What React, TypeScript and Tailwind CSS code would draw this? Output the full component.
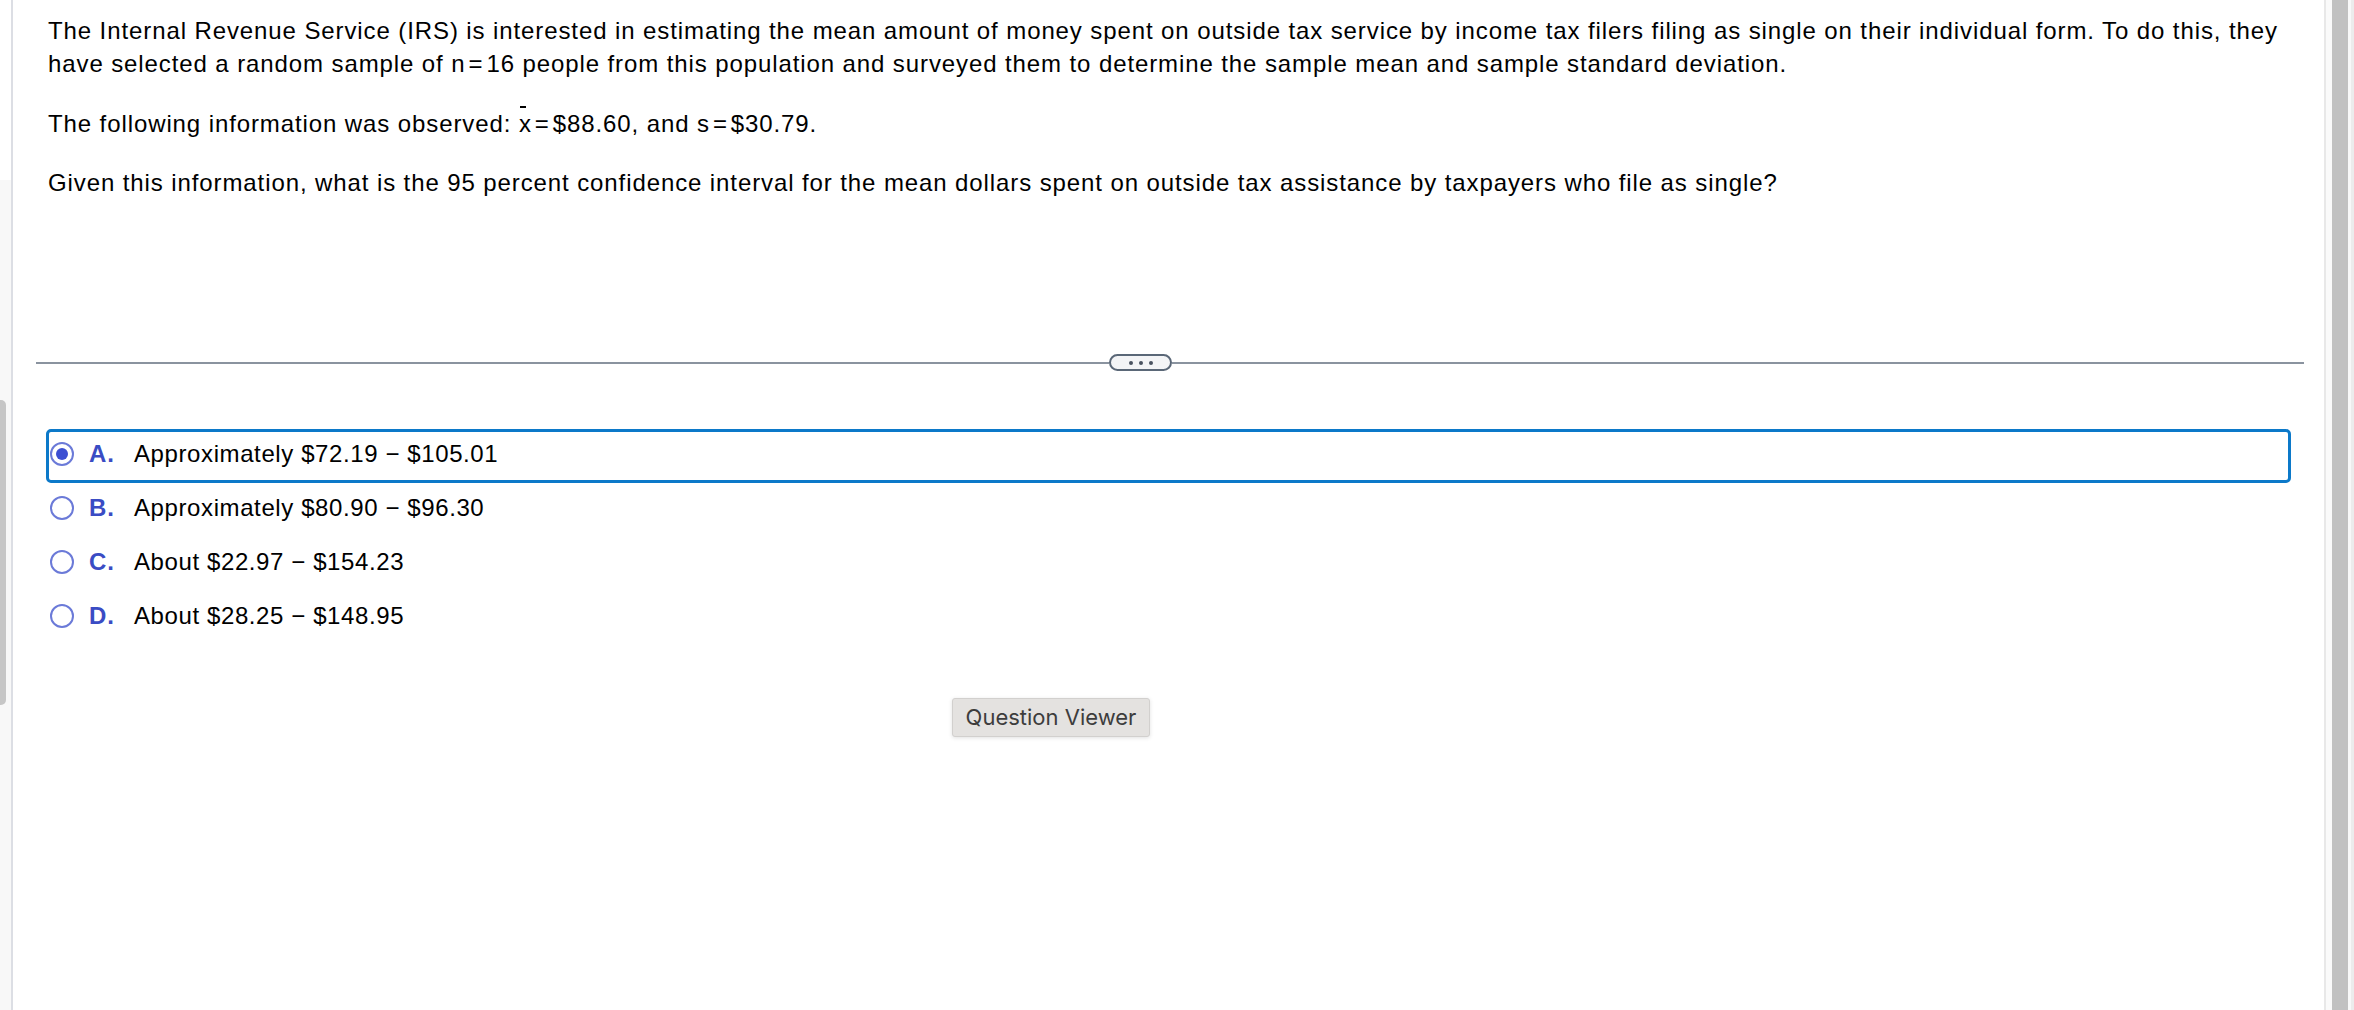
import type { ReactNode } from "react";

const font = { fontFamily: '"Liberation Sans", Arial, sans-serif' };

interface Choice {
  key: string;
  text: string;
  selected?: boolean;
}

const choices: Choice[] = [
  { key: "A.", text: "Approximately $72.19 − $105.01", selected: true },
  { key: "B.", text: "Approximately $80.90 − $96.30" },
  { key: "C.", text: "About $22.97 − $154.23" },
  { key: "D.", text: "About $28.25 − $148.95" },
];

/** Tight "=" like the math renderer uses. */
function Eq() {
  return <span className="mx-[3px]">=</span>;
}

/** x with a short bar over it. */
function XBar() {
  return (
    <span className="relative inline-block">
      x
      <span className="absolute left-[1px] top-[-1px] h-[2px] w-[6px] bg-black" />
    </span>
  );
}

function Radio({ on }: { on?: boolean }) {
  return (
    <span className="flex h-[24px] w-[24px] shrink-0 items-center justify-center rounded-full border-[2px] border-[#6b7ad8] bg-white">
      {on && <span className="h-[12px] w-[12px] rounded-full bg-[#3c4fd2]" />}
    </span>
  );
}

function Row({ c }: { c: Choice }) {
  return (
    <div
      className={
        "flex h-[54px] items-center rounded-[5px] border-[3px] pb-[4px] pl-[1px] " +
        (c.selected ? "border-[#0c79c9]" : "border-transparent")
      }
    >
      <Radio on={c.selected} />
      <span className="ml-[15px] w-[45px] font-bold tracking-[1px] text-[#3a4cc4]">{c.key}</span>
      <span className="tracking-[0.6px]">{c.text}</span>
    </div>
  );
}

function Divider() {
  return (
    <div className="ml-[23px] mr-[20px] mt-[155px] flex h-[17px] items-center">
      <span className="h-[2px] w-[1073px] bg-[#8a939f]" />
      <span className="flex h-[17px] w-[63px] shrink-0 items-center justify-center gap-[6px] rounded-full border-[2px] border-[#5a6777] bg-[#f3f4f6]">
        <span className="h-[4px] w-[4px] rounded-full bg-[#4a5260]" />
        <span className="h-[4px] w-[4px] rounded-full bg-[#4a5260]" />
        <span className="h-[4px] w-[4px] rounded-full bg-[#4a5260]" />
      </span>
      <span className="h-[2px] flex-1 bg-[#8a939f]" />
    </div>
  );
}

function Para({ className, children }: { className?: string; children: ReactNode }) {
  return <p className={"leading-[33px] tracking-[0.9px] " + (className ?? "")}>{children}</p>;
}

export default function App() {
  return (
    <div className="flex h-[1010px] w-[2354px] overflow-hidden bg-white text-[24px] text-black" style={font}>
      {/* left panel scroll track */}
      <div className="flex w-[11px] flex-col">
        <div className="h-[180px] bg-white" />
        <div className="flex-1 bg-[#f8f8f8] pt-[220px]">
          <div className="h-[305px] w-[6px] rounded-r-[5px] bg-[#c6c6c6]" />
        </div>
      </div>
      <div className="w-[2px] bg-[#dcdee4]" />

      <main className="flex-1">
        <div className="pl-[35px] pr-[24px] pt-[14px]">
          <Para>
            The Internal Revenue Service (IRS) is interested in estimating the mean amount of money spent on outside
            tax service by income tax filers filing as single on their individual form. To do this, they have selected
            a random sample of n<Eq />16 people from this population and surveyed them to determine the sample mean and
            sample standard deviation.
          </Para>
          <Para className="mt-[27px]">
            The following information was observed: <XBar />
            <Eq />
            $88.60, and s<Eq />
            $30.79.
          </Para>
          <Para className="mt-[26px]">
            Given this information, what is the 95 percent confidence interval for the mean dollars spent on outside
            tax assistance by taxpayers who file as single?
          </Para>
        </div>

        <Divider />

        <div className="ml-[33px] mr-[33px] mt-[58px] flex flex-col">
          {choices.map((c) => (
            <Row key={c.key} c={c} />
          ))}
        </div>

        <button
          className="ml-[939px] mt-[53px] flex h-[39px] w-[198px] items-center justify-center rounded-[3px] border border-[#d2d0ce] bg-[#e4e2e0] text-[22px] text-[#3d3d3d] shadow-[0_1px_4px_rgba(0,0,0,0.12)]"
          style={{ fontFamily: 'Inter, "Helvetica Neue", sans-serif' }}
        >
          Question Viewer
        </button>
      </main>

      {/* right scrollbar */}
      <div className="w-[2px] bg-[#e8e8e8]" />
      <div className="w-[6px] bg-[#fafafa]" />
      <div className="w-[16px] bg-[#c1c1c1]" />
      <div className="w-[3px] bg-[#f8f8f8]" />
      <div className="w-[3px] bg-[#ececec]" />
    </div>
  );
}
